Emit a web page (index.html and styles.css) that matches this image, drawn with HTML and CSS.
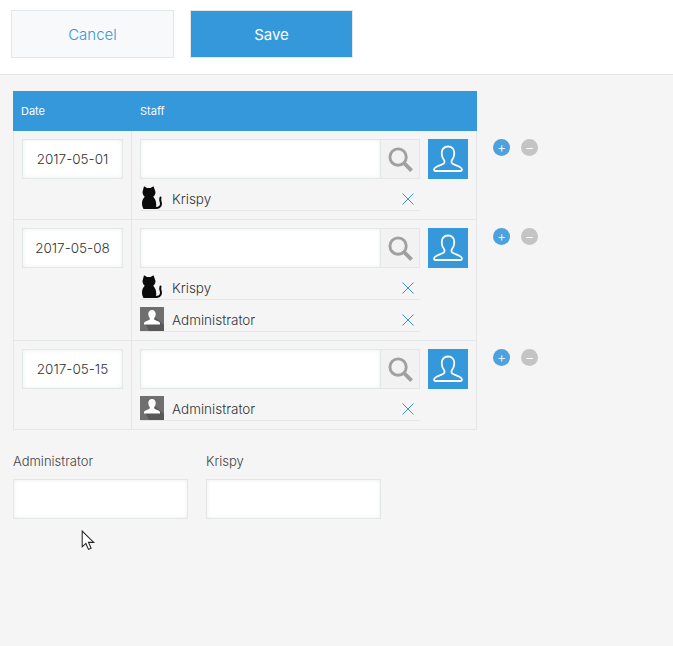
FILE: index.html
```html
<!DOCTYPE html>
<html lang="en">
<head>
<meta charset="utf-8">
<title>Schedule</title>
<link rel="stylesheet" href="styles.css">
</head>
<body>
<svg class="defs" width="0" height="0" aria-hidden="true">
  <symbol id="cat" viewBox="0 0 24 24">
    <path d="M4 .3 7 2h3.500L13.500 .3 15.500 6c0 2-1 3.800-2.300 4.800 2 2 3 4.800 3 7.700 0 2-.3 3.500-.7 4.500H3.500C2.700 21.500 2 19.500 2 17.500c0-3 1.200-5.200 2.800-6.700C3.500 9.800 2.500 8 2.500 6Z" fill="#0a0a0a"/>
    <path d="M15 22c3.500.3 6-1 6-4.300 0-2-1.500-3-.5-6.200" fill="none" stroke="#0a0a0a" stroke-width="2" stroke-linecap="round"/>
  </symbol>
  <symbol id="admin" viewBox="0 0 24 24">
    <rect width="24" height="24" fill="#6f6f6f"/>
    <path d="M24 24H9L6 18 14.500 10 24 18Z" fill="#585858"/>
    <path d="M12 3c2.400 0 3.700 1.700 3.700 4.100 0 1.800-.7 3.200-1.500 4.200v1.100c.9.800 2.700 1.300 4.100 2 .9.400 1.700.9 1.700 1.700v1.400H4v-1.400c0-.8.800-1.300 1.700-1.700 1.400-.7 3.200-1.200 4.100-2v-1.100C9 10.300 8.300 8.900 8.300 7.100 8.300 4.700 9.600 3 12 3Z" fill="#fff"/>
  </symbol>
  <symbol id="search" viewBox="0 0 26 26">
    <circle cx="10.500" cy="10.500" r="8.500" fill="none" stroke="#a0a0a0" stroke-width="3"/>
    <path d="M17 17 24.500 24.500" stroke="#a0a0a0" stroke-width="4" stroke-linecap="butt"/>
  </symbol>
  <symbol id="user" viewBox="0 0 40 40">
    <path d="M20 7.500c4 0 6.300 2.800 6.300 6.800 0 3-1 5.200-2.400 6.900-.7.900-.6 2.600.4 3.300 2.300 1.500 5.800 2.500 7.900 3.700 1.200.6 1.800 1.500 1.800 2.600 0 .7-.6 1.200-1.400 1.200H7.400c-.8 0-1.400-.5-1.400-1.200 0-1.100.6-2 1.800-2.600 2.100-1.200 5.600-2.200 7.900-3.700 1-.7 1.100-2.400.4-3.300-1.400-1.700-2.400-3.900-2.400-6.900 0-4 2.300-6.800 6.300-6.800Z" fill="none" stroke="#fff" stroke-width="1.800"/>
  </symbol>
  <symbol id="close" viewBox="0 0 12 12">
    <path d="M.5.500 11.500 11.500M11.500.500.500 11.500" stroke="#3498db" stroke-width="1"/>
  </symbol>
</svg>

<header class="toolbar">
  <button class="btn btn-cancel" type="button">Cancel</button>
  <button class="btn btn-save" type="button">Save</button>
</header>

<main class="content">
  <div class="table">
    <div class="thead">
      <div class="th th-date">Date</div>
      <div class="th">Staff</div>
    </div>

    <div class="row">
      <div class="cell-date"><div class="date-input">2017-05-01</div></div>
      <div class="cell-staff">
        <div class="picker">
          <div class="search-box">
            <div class="search-input"></div>
            <div class="search-btn"><svg class="icon-search"><use href="#search"/></svg></div>
          </div>
          <div class="user-btn"><svg class="icon-user"><use href="#user"/></svg></div>
        </div>
        <div class="entry"><svg class="avatar"><use href="#cat"/></svg><span class="name">Krispy</span><svg class="icon-close"><use href="#close"/></svg></div>
      </div>
    </div>

    <div class="row">
      <div class="cell-date"><div class="date-input">2017-05-08</div></div>
      <div class="cell-staff">
        <div class="picker">
          <div class="search-box">
            <div class="search-input"></div>
            <div class="search-btn"><svg class="icon-search"><use href="#search"/></svg></div>
          </div>
          <div class="user-btn"><svg class="icon-user"><use href="#user"/></svg></div>
        </div>
        <div class="entry"><svg class="avatar"><use href="#cat"/></svg><span class="name">Krispy</span><svg class="icon-close"><use href="#close"/></svg></div>
        <div class="entry"><svg class="avatar"><use href="#admin"/></svg><span class="name">Administrator</span><svg class="icon-close"><use href="#close"/></svg></div>
      </div>
    </div>

    <div class="row">
      <div class="cell-date"><div class="date-input">2017-05-15</div></div>
      <div class="cell-staff">
        <div class="picker">
          <div class="search-box">
            <div class="search-input"></div>
            <div class="search-btn"><svg class="icon-search"><use href="#search"/></svg></div>
          </div>
          <div class="user-btn"><svg class="icon-user"><use href="#user"/></svg></div>
        </div>
        <div class="entry"><svg class="avatar"><use href="#admin"/></svg><span class="name">Administrator</span><svg class="icon-close"><use href="#close"/></svg></div>
      </div>
    </div>

    <div class="row-actions row-actions-1"><span class="round add">+</span><span class="round remove">−</span></div>
    <div class="row-actions row-actions-2"><span class="round add">+</span><span class="round remove">−</span></div>
    <div class="row-actions row-actions-3"><span class="round add">+</span><span class="round remove">−</span></div>
  </div>

  <div class="fields">
    <div class="field">
      <div class="field-label">Administrator</div>
      <div class="field-input"></div>
    </div>
    <div class="field">
      <div class="field-label">Krispy</div>
      <div class="field-input"></div>
    </div>
  </div>
</main>

<svg class="cursor" width="15" height="21" viewBox="0 0 14 20" aria-hidden="true">
  <path d="M1 1v15l3.500-3.200L7 18.500l2.500-1.100L7 11.800h5Z" fill="#fff" stroke="#222" stroke-width="1"/>
</svg>
</body>
</html>
```

FILE: styles.css
```css
* { box-sizing: border-box; }
html, body { margin: 0; height: 100%; overflow: hidden; }
body {
  background: #f5f5f5;
  font-family: Inter, "Liberation Sans", Arial, sans-serif;
  font-weight: 300;
  font-size: 13.500px;
  color: #333;
  position: relative;
}
.defs { position: absolute; }

.toolbar {
  height: 75px;
  background: #fff;
  border-bottom: 1px solid #e3e7e8;
  padding: 10px 11px 0;
  display: flex;
  align-items: flex-start;
  gap: 16px;
}
.btn {
  width: 163px;
  height: 48px;
  font: 300 15px Inter, "Liberation Sans", Arial, sans-serif;
  padding: 0;
}
.btn-cancel {
  background: #f7f9fa;
  border: 1px solid #e3e7e8;
  color: #3498db;
}
.btn-save {
  background: #3498db;
  border: 1px solid #e3e7e8;
  color: #fff;
  font-weight: 400;
}

.content { padding: 16px 13px 0; }

.table { width: 464px; position: relative; }
.thead {
  display: flex;
  height: 40px;
  background: #3498db;
  color: #fff;
  font-size: 11px;
  font-weight: 400;
  align-items: center;
}
.th { padding-left: 8px; }
.th-date { width: 119px; }

.row {
  display: flex;
  border: 1px solid #e3e7e8;
  border-top: 0;
}
.cell-date {
  width: 118px;
  padding: 8px 0 0 8px;
  border-right: 1px solid #e3e7e8;
  flex: none;
}
.date-input {
  width: 101px;
  height: 40px;
  background: #fff;
  border: 1px solid #e3e7e8;
  box-shadow: inset 0 0 4px #eceeee;
  text-align: center;
  line-height: 38px;
}
.cell-staff { padding: 8px 0 0 8px; flex: 1; }
.picker { display: flex; gap: 8px; }
.search-box {
  display: flex;
  width: 280px;
  height: 40px;
  border: 1px solid #e3e7e8;
}
.search-input { flex: 1; background: #fff; box-shadow: inset 0 0 4px #eceeee; }
.search-btn {
  width: 39px;
  background: #f2f2f2;
  border-left: 1px solid #e3e7e8;
  display: flex;
  align-items: center;
  justify-content: center;
}
.icon-search { width: 25px; height: 25px; }
.user-btn { width: 40px; height: 40px; background: #3498db; }
.icon-user { width: 40px; height: 40px; display: block; }

.entry {
  width: 280px;
  height: 32px;
  display: flex;
  align-items: flex-end;
  border-bottom: 1px solid #e3e7e8;
}
.entry:last-child { margin-bottom: 8px; }
.avatar { width: 24px; height: 24px; flex: none; }
.name { margin-left: 8px; line-height: 22px; flex: 1; }
.icon-close { width: 12px; height: 12px; margin: 0 6px 5px 0; flex: none; }

.row-actions {
  position: absolute;
  left: 480px;
  display: flex;
  gap: 11px;
}
.row-actions-1 { top: 48px; }
.row-actions-2 { top: 137px; }
.row-actions-3 { top: 258px; }
.round {
  width: 17px;
  height: 17px;
  border-radius: 50%;
  color: #fff;
  font-size: 14px;
  line-height: 16px;
  text-align: center;
}
.add { background: #4ba2de; }
.remove { background: #c4c4c4; }

.fields { display: flex; gap: 18px; margin-top: 22px; }
.field-label { font-size: 13px; line-height: 18px; color: #444; }
.field-input {
  width: 175px;
  height: 40px;
  margin-top: 9px;
  background: #fff;
  border: 1px solid #e3e7e8;
  box-shadow: inset 0 0 4px #eceeee;
}

.cursor { position: absolute; left: 81px; top: 530px; }
```
